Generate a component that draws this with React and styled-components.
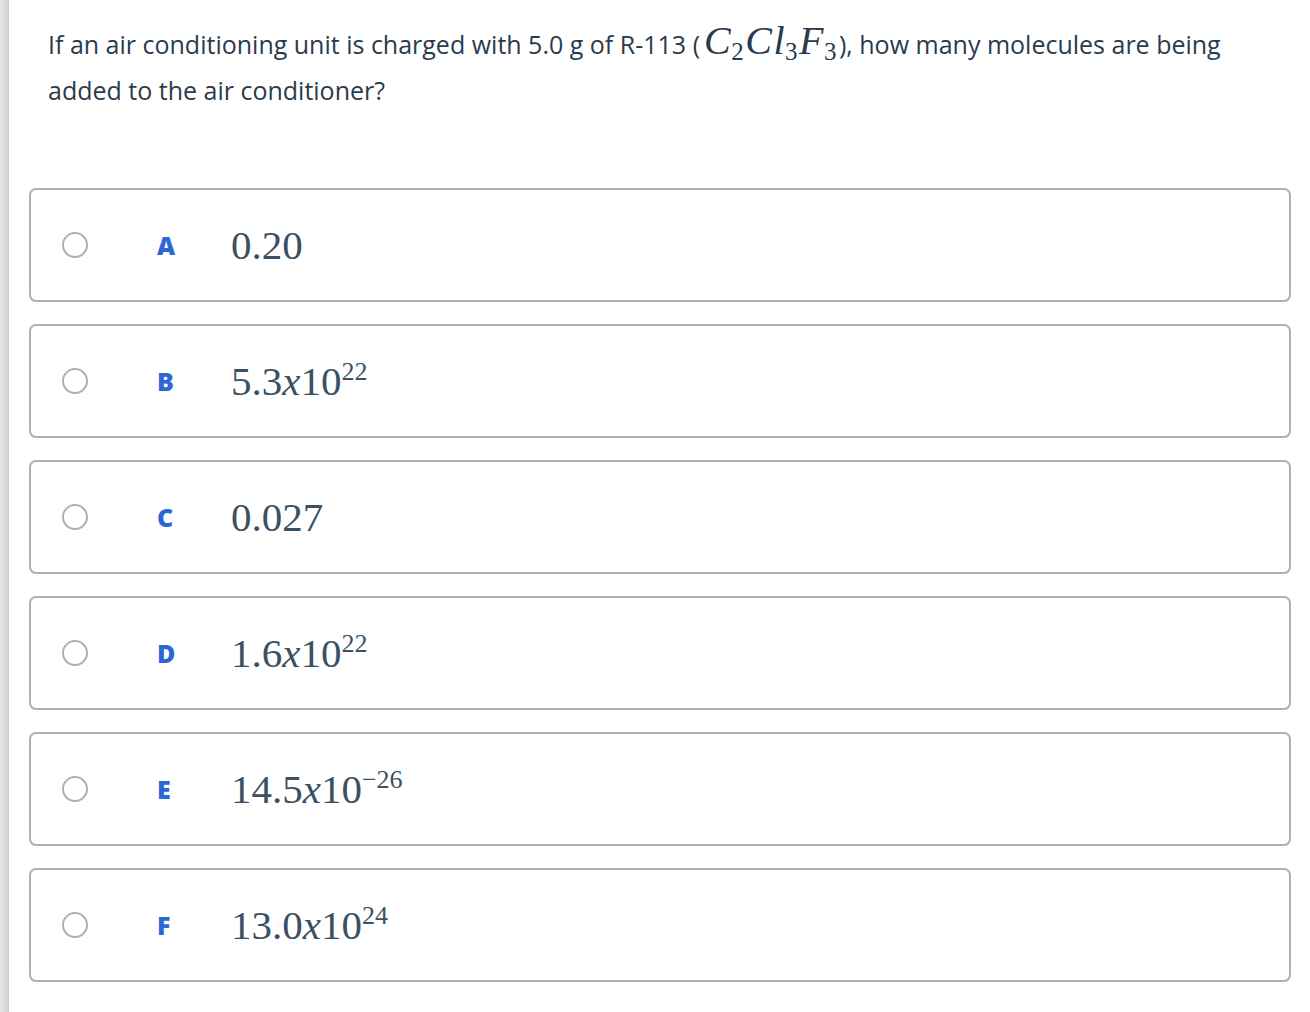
import React from "react";
import styled, { createGlobalStyle } from "styled-components";

const options = [
  { key: "A", base: "0.20" },
  { key: "B", base: "5.3", exp: "22" },
  { key: "C", base: "0.027" },
  { key: "D", base: "1.6", exp: "22" },
  { key: "E", base: "14.5", exp: "−26" },
  { key: "F", base: "13.0", exp: "24" },
];

const App = () => {
  return (
    <>
      <GlobalStyle />
      <Page>
        <Edge />
        <Content>
          <Question>
            If an air conditioning unit is charged with 5.0 g of R-113 (
            <Formula>
              C<Sub>2</Sub>Cl<Sub>3</Sub>F<Sub>3</Sub>
            </Formula>
            ), how many molecules are being added to the air conditioner?
          </Question>
          <List>
            {options.map((o) => (
              <Option key={o.key}>
                <Radio />
                <Letter>{o.key}</Letter>
                <Answer>
                  {o.base}
                  {o.exp && (
                    <>
                      <Var>x</Var>10<Sup>{o.exp}</Sup>
                    </>
                  )}
                </Answer>
              </Option>
            ))}
          </List>
        </Content>
      </Page>
    </>
  );
};

const GlobalStyle = createGlobalStyle`
  html, body {
    margin: 0;
    padding: 0;
    background: #fff;
  }
`;

const Page = styled.div`
  display: flex;
  min-height: 1012px;
  background: #fff;
`;

const Edge = styled.div`
  width: 9px;
  flex-shrink: 0;
  background: linear-gradient(to right, #e6e6e6, #d8d8d8 70%, #cacaca);
`;

const Content = styled.div`
  flex: 1;
  padding: 18px 19px 0 20px;
`;

const Question = styled.p`
  margin: 0 46px 0 19px;
  font-family: "Open Sans", sans-serif;
  font-size: 25px;
  line-height: 46px;
  color: #2a3b4d;
`;

const Formula = styled.span`
  font-family: "Liberation Serif", serif;
  font-style: italic;
  font-size: 40px;
  letter-spacing: 1.5px;
  margin: 0 1px 0 4px;
`;

const Sub = styled.sub`
  font-style: normal;
  font-size: 25px;
  vertical-align: -6px;
  line-height: 0;
  margin-left: -1px;
`;

const List = styled.div`
  display: flex;
  flex-direction: column;
  gap: 22px;
  margin-top: 75px;
`;

const Option = styled.div`
  display: flex;
  align-items: center;
  height: 114px;
  box-sizing: border-box;
  border: 2px solid #a9b2ba;
  border-radius: 7px;
  padding: 0 0 0 31px;
`;

const Radio = styled.span`
  width: 22px;
  height: 22px;
  border: 2px solid #a9b1b8;
  border-radius: 50%;
  flex-shrink: 0;
`;

const Letter = styled.span`
  width: 74px;
  margin-left: 69px;
  font-family: "Open Sans", sans-serif;
  font-weight: 800;
  font-size: 25px;
  color: #2d67d6;
`;

const Answer = styled.span`
  font-family: "Liberation Serif", serif;
  font-size: 41px;
  color: #3b5062;
`;

const Var = styled.i`
  font-style: italic;
`;

const Sup = styled.sup`
  font-size: 26px;
  vertical-align: 15px;
  line-height: 0;
`;

export default App;
